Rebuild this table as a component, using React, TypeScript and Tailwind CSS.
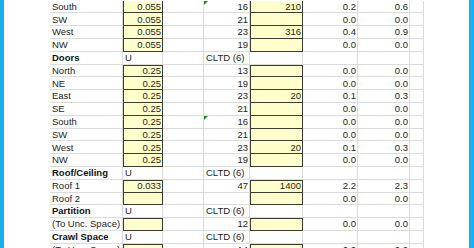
type Row =
  | { kind: "head"; label: string }
  | {
      kind: "data"
      label: string
      u: string
      cltd: string
      area: string
      f: string
      g: string
      mark?: boolean
    }

const rows: Row[] = [
  { kind: "data", label: "South", u: "0.055", cltd: "16", area: "210", f: "0.2", g: "0.6", mark: true },
  { kind: "data", label: "SW", u: "0.055", cltd: "21", area: "", f: "0.0", g: "0.0" },
  { kind: "data", label: "West", u: "0.055", cltd: "23", area: "316", f: "0.4", g: "0.9" },
  { kind: "data", label: "NW", u: "0.055", cltd: "19", area: "", f: "0.0", g: "0.0" },
  { kind: "head", label: "Doors" },
  { kind: "data", label: "North", u: "0.25", cltd: "13", area: "", f: "0.0", g: "0.0" },
  { kind: "data", label: "NE", u: "0.25", cltd: "19", area: "", f: "0.0", g: "0.0" },
  { kind: "data", label: "East", u: "0.25", cltd: "23", area: "20", f: "0.1", g: "0.3" },
  { kind: "data", label: "SE", u: "0.25", cltd: "21", area: "", f: "0.0", g: "0.0" },
  { kind: "data", label: "South", u: "0.25", cltd: "16", area: "", f: "0.0", g: "0.0", mark: true },
  { kind: "data", label: "SW", u: "0.25", cltd: "21", area: "", f: "0.0", g: "0.0" },
  { kind: "data", label: "West", u: "0.25", cltd: "23", area: "20", f: "0.1", g: "0.3" },
  { kind: "data", label: "NW", u: "0.25", cltd: "19", area: "", f: "0.0", g: "0.0" },
  { kind: "head", label: "Roof/Ceiling" },
  { kind: "data", label: "Roof 1", u: "0.033", cltd: "47", area: "1400", f: "2.2", g: "2.3" },
  { kind: "data", label: "Roof 2", u: "", cltd: "", area: "", f: "0.0", g: "0.0" },
  { kind: "head", label: "Partition" },
  { kind: "data", label: "(To Unc. Space)", u: "", cltd: "12", area: "", f: "0.0", g: "0.0" },
  { kind: "head", label: "Crawl Space" },
  { kind: "data", label: "(To Unc. Space)", u: "", cltd: "14", area: "", f: "0.0", g: "0.0" },
]

function Cell({
  w,
  yellow,
  top,
  right,
  bold,
  children,
}: {
  w: string
  yellow?: boolean
  top?: boolean
  right?: boolean
  bold?: boolean
  children?: React.ReactNode
}) {
  let cls = `relative h-full shrink-0 border-r border-b flex items-center whitespace-nowrap ${w}`
  cls += right ? " justify-end pr-[1px]" : " pl-[2px]"
  if (yellow) {
    cls += " bg-[#ffffcc] border-[#3d3c30]"
    cls += top ? " shadow-[inset_1px_1px_0_#3d3c30]" : " shadow-[inset_1px_0_0_#3d3c30]"
  } else {
    cls += " border-[#dcdcdc]"
  }
  if (bold) cls += " font-bold text-[#111]"
  return <div className={cls}>{children}</div>
}

export default function App() {
  return (
    <div className="flex h-[248px] w-[474px] overflow-hidden bg-white font-['Liberation_Sans',Arial,sans-serif] text-[9.5px] leading-none text-[#1e1e1e]">
      <div className="w-[4px] shrink-0 bg-[#17b2ee]"></div>
      <div className="w-[46px] shrink-0"></div>
      <div className="flex shrink-0 flex-col pt-[0.6px]">
        {rows.map((r, i) => {
          const prev = rows[i - 1]
          const prevData = i === 0 || (prev && prev.kind === "data")
          if (r.kind === "head") {
            return (
              <div key={i} className="flex h-[12.8px] shrink-0">
                <Cell w="w-[73px]" bold>{r.label}</Cell>
                <Cell w="w-[40px]">U</Cell>
                <Cell w="w-[41px]" />
                <Cell w="w-[46px]">CLTD (6)</Cell>
                <Cell w="w-[53px]" />
                <Cell w="w-[55px]" />
                <Cell w="w-[52px]" />
                <Cell w="w-[14px]" />
              </div>
            )
          }
          return (
            <div key={i} className="flex h-[12.8px] shrink-0">
              <Cell w="w-[73px]">{r.label}</Cell>
              <Cell w="w-[40px]" yellow top={!prevData} right>{r.u}</Cell>
              <Cell w="w-[41px]" />
              <Cell w="w-[46px]" right>
                {r.mark && (
                  <span className="absolute left-0 top-0 h-0 w-0 border-l-[4px] border-b-[4px] border-t-[0px] border-l-[#1a8c1a] border-b-transparent border-solid"></span>
                )}
                {r.cltd}
              </Cell>
              <Cell w="w-[53px]" yellow top={!prevData} right>{r.area}</Cell>
              <Cell w="w-[55px]" right>{r.f}</Cell>
              <Cell w="w-[52px]" right>{r.g}</Cell>
              <Cell w="w-[14px]" />
            </div>
          )
        })}
      </div>
      <div className="flex-1"></div>
      <div className="w-[5px] shrink-0 bg-[#17b2ee]"></div>
    </div>
  )
}
